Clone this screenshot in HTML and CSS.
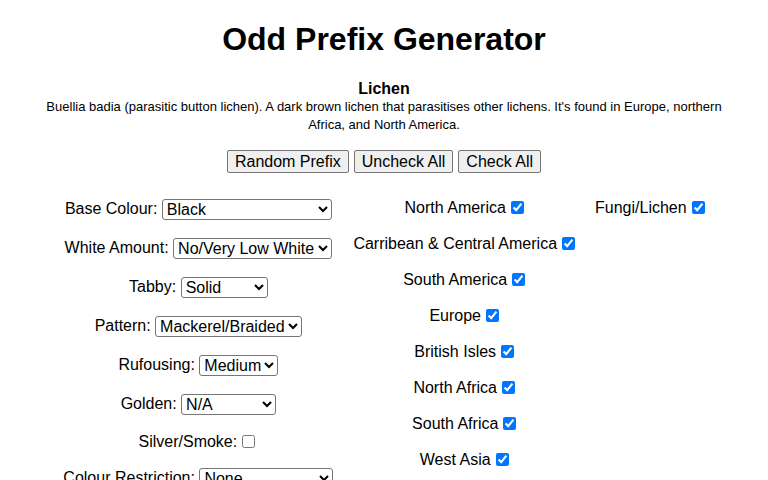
FILE: index.html
```html
<!DOCTYPE html>
<html lang="en">
<head>
<meta charset="utf-8">
<title>Odd Prefix Generator</title>
<link rel="stylesheet" href="styles.css">
</head>
<body>
<h1 class="title">Odd Prefix Generator</h1>
<h4 class="prefix-name">Lichen</h4>
<p class="prefix-desc">Buellia badia (parasitic button lichen). A dark brown lichen that parasitises other lichens. It's found in Europe, northern Africa, and North America.</p>
<p class="buttons"><button>Random Prefix</button> <button>Uncheck All</button> <button>Check All</button></p>
<div class="grid">
  <div class="col col-left">
    <div class="row sel-row"><label>Base Colour: <select class="w-base"><option>Black</option></select></label></div>
    <div class="row sel-row"><label>White Amount: <select class="w-auto"><option>No/Very Low White</option></select></label></div>
    <div class="row sel-row"><label>Tabby: <select class="w-tabby"><option>Solid</option></select></label></div>
    <div class="row sel-row"><label>Pattern: <select class="w-auto"><option>Mackerel/Braided</option></select></label></div>
    <div class="row sel-row"><label>Rufousing: <select class="w-auto"><option>Medium</option></select></label></div>
    <div class="row sel-row"><label>Golden: <select class="w-golden"><option>N/A</option></select></label></div>
    <div class="row chk-row"><label>Silver/Smoke:<input class="chk-silver" type="checkbox"></label></div>
    <div class="row sel-row"><label>Colour Restriction: <select class="w-restr"><option>None</option></select></label></div>
  </div>
  <div class="col col-mid">
    <div class="row reg-row"><label>North America<input type="checkbox" checked></label></div>
    <div class="row reg-row"><label>Carribean &amp; Central America<input type="checkbox" checked></label></div>
    <div class="row reg-row"><label>South America<input type="checkbox" checked></label></div>
    <div class="row reg-row"><label>Europe<input type="checkbox" checked></label></div>
    <div class="row reg-row"><label>British Isles<input type="checkbox" checked></label></div>
    <div class="row reg-row"><label>North Africa<input type="checkbox" checked></label></div>
    <div class="row reg-row"><label>South Africa<input type="checkbox" checked></label></div>
    <div class="row reg-row"><label>West Asia<input type="checkbox" checked></label></div>
  </div>
  <div class="col col-right">
    <div class="row reg-row"><label>Fungi/Lichen<input type="checkbox" checked></label></div>
  </div>
</div>
</body>
</html>
```
FILE: styles.css
```css
html, body {
  background: #fff;
}
body {
  margin: 0;
  padding: 0 8px;
  font-family: "Liberation Sans", Arial, sans-serif;
  color: #000;
  text-align: center;
  font-size: 16px;
}
.title {
  font-size: 32px;
  font-weight: bold;
  margin: 0;
  padding-top: 21px;
  line-height: 37px;
}
.prefix-name {
  font-size: 16px;
  font-weight: bold;
  margin: 21px 0 0;
  line-height: 19px;
}
.prefix-desc {
  font-size: 13px;
  line-height: 18px;
  margin: 0 auto;
  max-width: 680px;
}
.buttons {
  margin: 16px 0 0;
  height: 23px;
  line-height: 23px;
  display: flex;
  justify-content: center;
  gap: 5px;
}
button {
  font-family: "Liberation Sans", Arial, sans-serif;
  font-size: 16px;
  color: #000;
  background: #efefef;
  border: 1px solid #767676;
  border-radius: 2px;
  padding: 1px 7px;
  height: 23px;
  line-height: 19px;
}
.grid {
  display: grid;
  grid-template-columns: auto auto auto;
  justify-content: center;
  margin-top: 24px;
  padding-left: 3px;
  align-items: start;
}
.col {
  display: flex;
  flex-direction: column;
  gap: 16px;
  padding: 0 10px;
}
.col-left {
  padding-top: 1px;
}
.col-mid {
  padding-right: 7px;
}
.row {
  display: flex;
  align-items: center;
  justify-content: center;
  white-space: nowrap;
}
.row label {
  display: inline;
  line-height: 19px;
}
.sel-row { height: 23px; }
.reg-row { height: 20px; }
.chk-row { height: 19px; }
select {
  font-family: "Liberation Sans", Arial, sans-serif;
  font-size: 16px;
  color: #000;
  background: #fff;
  border: 1px solid #767676;
  border-radius: 3px;
  height: 21px;
  padding: 0;
  vertical-align: middle;
}
input[type="checkbox"] {
  width: 13px;
  height: 13px;
  margin: 0 3px 0 5px;
  vertical-align: -1px;
  accent-color: #0075ff;
}
.chk-silver {
  margin-left: 7px;
}
.w-base { width: 170px; }
.w-tabby { width: 87px; }
.w-golden { width: 95px; }
.w-restr { width: 134px; }
```
